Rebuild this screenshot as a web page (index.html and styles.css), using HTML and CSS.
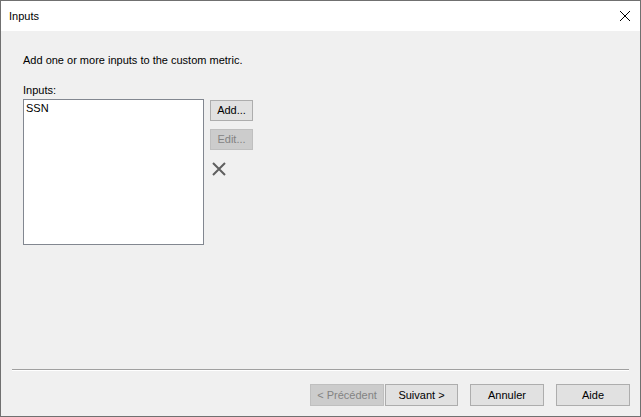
FILE: index.html
```html
<!DOCTYPE html>
<html>
<head>
<meta charset="utf-8">
<link rel="stylesheet" href="styles.css">
</head>
<body>
<div class="window">
  <div class="titlebar">
    <span class="title">Inputs</span>
    <svg class="close" width="12" height="12" viewBox="0 0 12 12"><path d="M1 1 L11 11 M11 1 L1 11" stroke="#000" stroke-width="1" fill="none"/></svg>
  </div>
  <div class="content">
    <div class="intro">Add one or more inputs to the custom metric.</div>
    <div class="label">Inputs:</div>
    <div class="row">
      <div class="listbox"><div class="item">SSN</div></div>
      <div class="side">
        <div class="btn small">Add...</div>
        <div class="btn small disabled">Edit...</div>
        <svg class="del" width="16" height="16" viewBox="0 0 16 16"><path d="M2 2 L14 14 M14 2 L2 14" stroke="#5f5f5f" stroke-width="2" fill="none"/></svg>
      </div>
    </div>
    <div class="footer">
      <div class="sep"></div>
      <div class="buttons">
        <div class="btn wide disabled">&lt; Précédent</div>
        <div class="btn wide next">Suivant &gt;</div>
        <div class="btn wide gap">Annuler</div>
        <div class="btn wide gap">Aide</div>
      </div>
    </div>
  </div>
</div>
</body>
</html>
```
FILE: styles.css
```css
html, body { margin: 0; padding: 0; }
body { font-family: "Liberation Sans", Arial, sans-serif; font-size: 11px; color: #000; }
.window {
  width: 641px; height: 417px; box-sizing: border-box;
  border: 1px solid #707070; background: #f0f0f0;
  display: flex; flex-direction: column;
}
.titlebar {
  height: 30px; background: #fff; display: flex; align-items: center;
  padding: 0 9px 0 8px; justify-content: space-between;
}
.title { line-height: 15px; margin-top: 1px; }
.close { display: block; margin-top: -1px; }
.content { flex: 1; display: flex; flex-direction: column; padding: 22px 0 0 22px; }
.intro { line-height: 15px; }
.label { line-height: 15px; margin-top: 15px; }
.row { display: flex; margin-top: 1px; }
.listbox {
  width: 181px; height: 146px; box-sizing: border-box;
  background: #fff; border: 1px solid #828790; padding: 1px 2px;
}
.item { line-height: 15px; }
.side { display: flex; flex-direction: column; margin-left: 6px; padding-top: 1px; }
.btn {
  box-sizing: border-box; background: #e1e1e1; border: 1px solid #adadad;
  display: flex; align-items: center; justify-content: center; line-height: 15px;
}
.btn.disabled { background: #cccccc; border-color: #bfbfbf; color: #838383; }
.small { width: 43px; height: 21px; margin-bottom: 8px; }
.del { display: block; margin: 3px 0 0 1px; }
.footer { margin-top: auto; margin-left: -22px; }
.sep { margin: 0 11px; border-top: 1px solid #a0a0a0; border-bottom: 1px solid #fff; }
.buttons { display: flex; justify-content: flex-end; padding: 13px 10px 10px 0; }
.wide { width: 74px; height: 22px; }
.next { margin-left: 1px; width: 73px; }
.gap { margin-left: 12px; }
```
